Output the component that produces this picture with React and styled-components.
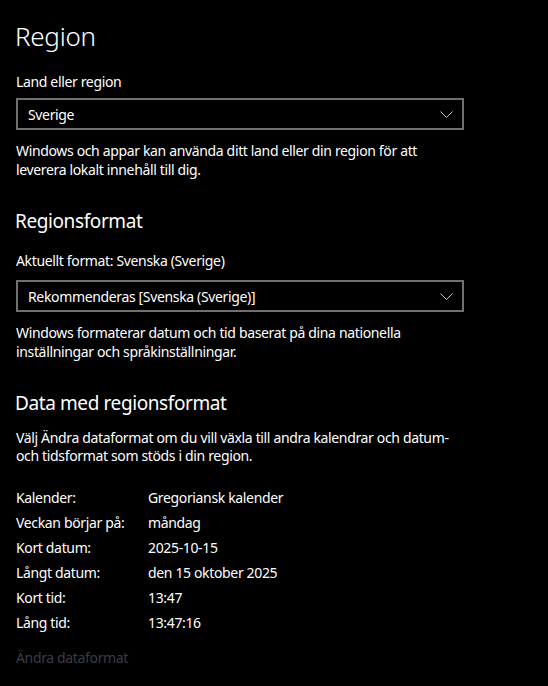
import styled, { createGlobalStyle } from "styled-components";

const GlobalStyle = createGlobalStyle`
  html, body {
    margin: 0;
    padding: 0;
    background: #000;
  }
  body {
    font-family: "Noto Sans", "Open Sans", sans-serif;
    color: #fff;
  }
`;

const rows = [
  ["Kalender:", "Gregoriansk kalender"],
  ["Veckan börjar på:", "måndag"],
  ["Kort datum:", "2025-10-15"],
  ["Långt datum:", "den 15 oktober 2025"],
  ["Kort tid:", "13:47"],
  ["Lång tid:", "13:47:16"],
];

export default function App() {
  return (
    <Page>
      <GlobalStyle />
      <Title>Region</Title>

      <Label>Land eller region</Label>
      <Select $top={6}>
        <span>Sverige</span>
        <Chevron />
      </Select>
      <Text>
        Windows och appar kan använda ditt land eller din region för att
        <br />
        leverera lokalt innehåll till dig.
      </Text>

      <Heading>Regionsformat</Heading>
      <Label>Aktuellt format: Svenska (Sverige)</Label>
      <Select $top={9}>
        <span>Rekommenderas [Svenska (Sverige)]</span>
        <Chevron />
      </Select>
      <Text>
        Windows formaterar datum och tid baserat på dina nationella
        <br />
        inställningar och språkinställningar.
      </Text>

      <Heading>Data med regionsformat</Heading>
      <Text $top={12} $lh={18}>
        Välj Ändra dataformat om du vill växla till andra kalendrar och datum-
        <br />
        och tidsformat som stöds i din region.
      </Text>

      <Table>
        {rows.map(([k, v]) => (
          <Row key={k}>
            <span>{k}</span>
            <span>{v}</span>
          </Row>
        ))}
      </Table>

      <Link>Ändra dataformat</Link>
    </Page>
  );
}

function Chevron() {
  return (
    <ChevronSvg width="13" height="7" viewBox="0 0 13 7">
      <path d="M0.5 0.5 L6.5 6.5 L12.5 0.5" fill="none" stroke="#c8c8c8" strokeWidth="1" />
    </ChevronSvg>
  );
}

const Page = styled.div`
  width: 548px;
  height: 686px;
  box-sizing: border-box;
  padding: 16px 16px 0 15px;
  overflow: hidden;
  background: #000;
  letter-spacing: -0.35px;
`;

const Title = styled.h1`
  margin: 0;
  font-size: 26px;
  font-weight: 300;
  line-height: 40px;
  letter-spacing: -0.3px;
`;

const Heading = styled.h2`
  margin: 28px 0 0;
  font-size: 19px;
  font-weight: 400;
  line-height: 28px;
  letter-spacing: -0.4px;
`;

const Label = styled.div`
  margin-top: 16px;
  padding-left: 1px;
  font-size: 14px;
  line-height: 20px;
`;

const Select = styled.div`
  margin-top: ${(p) => p.$top}px;
  margin-left: 1px;
  width: 448px;
  height: 32px;
  box-sizing: border-box;
  border: 2px solid #707070;
  display: flex;
  align-items: center;
  justify-content: space-between;
  padding: 0 9px 0 10px;
  font-size: 14px;
`;

const ChevronSvg = styled.svg`
  display: block;
`;

const Text = styled.p`
  margin: ${(p) => p.$top ?? 11}px 0 0;
  padding-left: 1px;
  font-size: 14px;
  line-height: ${(p) => p.$lh ?? 19}px;
`;

const Table = styled.div`
  margin-top: 20px;
  padding-left: 1px;
  display: flex;
  flex-direction: column;
`;

const Row = styled.div`
  display: grid;
  grid-template-columns: 132px 1fr;
  font-size: 14px;
  line-height: 25px;
`;

const Link = styled.div`
  margin-top: 13px;
  padding-left: 1px;
  font-size: 14px;
  line-height: 20px;
  color: #3a3d47;
`;
